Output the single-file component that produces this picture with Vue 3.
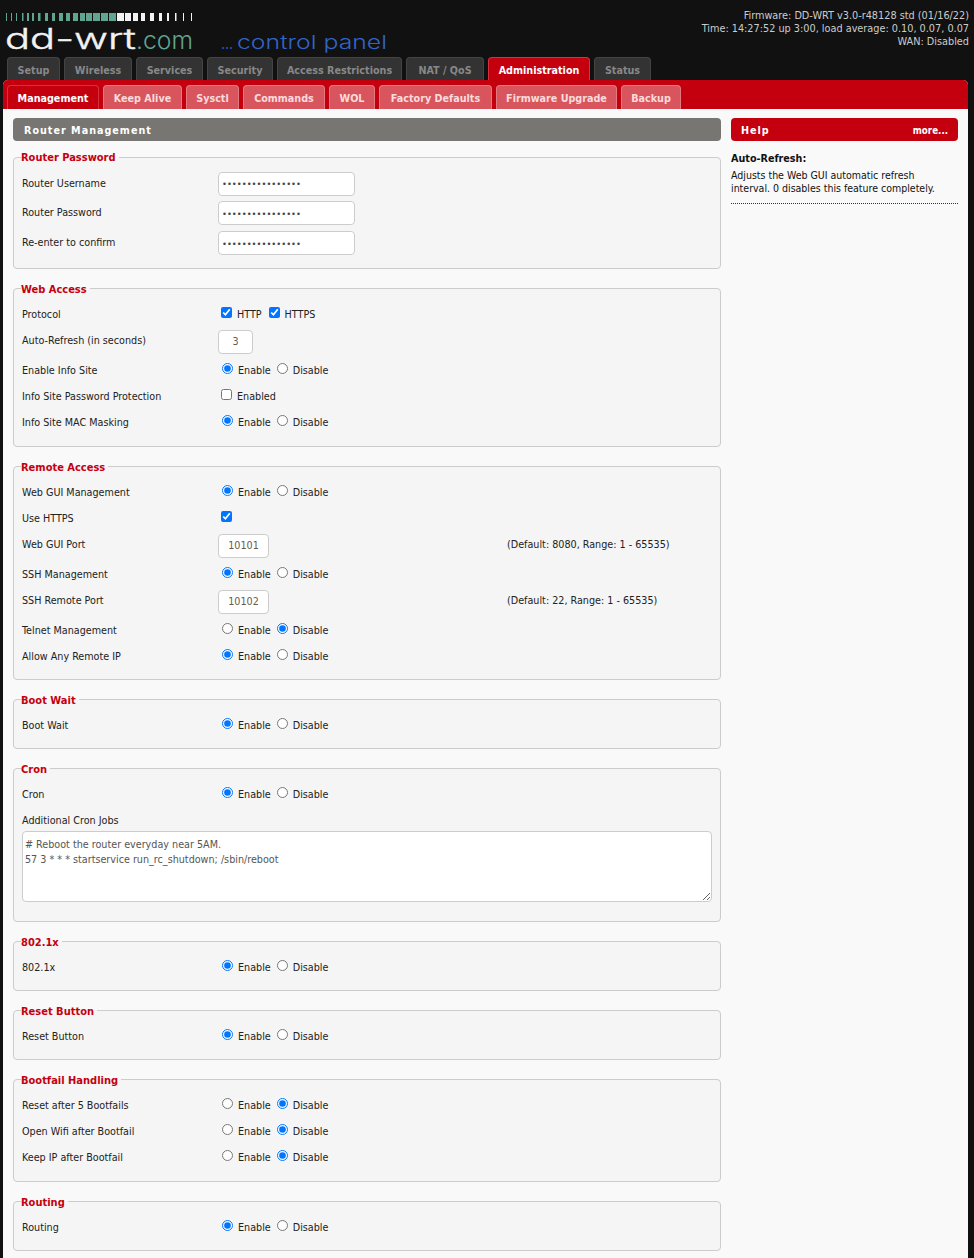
<template>
  <div class="page">
    <div class="header">
      <svg class="logo" width="400" height="57" viewBox="0 0 400 57">
        <rect
          v-for="(b, i) in bars"
          :key="i"
          :x="b[0]"
          y="13"
          :width="b[1]"
          height="8"
          :fill="i < 17 ? '#5fa58f' : '#f2f2f2'"
        />
        <text x="5" y="49" class="logo-main" textLength="131" lengthAdjust="spacingAndGlyphs">dd-wrt</text>
        <text x="136" y="49" class="logo-com" textLength="57" lengthAdjust="spacingAndGlyphs">.com</text>
        <text x="221" y="49" class="logo-panel" textLength="12" lengthAdjust="spacingAndGlyphs">...</text>
        <text x="237" y="49" class="logo-panel" textLength="150" lengthAdjust="spacingAndGlyphs">control panel</text>
      </svg>
      <div class="info">
        <div>Firmware: DD-WRT v3.0-r48128 std (01/16/22)</div>
        <div>Time: 14:27:52 up 3:00, load average: 0.10, 0.07, 0.07</div>
        <div>WAN: Disabled</div>
      </div>
    </div>

    <div class="tabs">
      <div
        v-for="t in mainTabs"
        :key="t.name"
        class="tab"
        :class="{ active: t.name === 'Administration' }"
        :style="{ width: t.width + 'px' }"
      >
        {{ t.name }}
      </div>
    </div>

    <div class="frame">
      <div class="subtabs">
        <div
          v-for="t in subTabs"
          :key="t.name"
          class="subtab"
          :class="{ active: t.name === 'Management' }"
          :style="{ width: t.width + 'px' }"
        >
          {{ t.name }}
        </div>
      </div>

      <div class="content">
        <div class="main">
          <h2 class="bar">Router Management</h2>

          <fieldset v-for="s in sections" :key="s.title" :class="{ tall: s.tall }">
            <legend>{{ s.title }}</legend>
            <template v-for="r in s.rows" :key="r.label">
              <div class="row" :class="r.kind">
                <div class="label">{{ r.label }}</div>
                <div class="value">
                  <template v-if="r.kind === 'radio'">
                    <label class="opt"><input type="radio" :name="r.label" :checked="r.on" />Enable</label>
                    <label class="opt"><input type="radio" :name="r.label" :checked="!r.on" />Disable</label>
                  </template>
                  <input v-else-if="r.kind === 'pass'" class="text pass" type="password" value="aaaaaaaaaaaaaaaa" />
                  <input v-else-if="r.kind === 'num'" class="text num" type="text" :style="{ width: r.width + 'px' }" :value="r.value" />
                  <template v-else-if="r.kind === 'check'">
                    <label v-for="o in r.options" :key="o.text" class="opt check">
                      <input type="checkbox" :checked="o.on" />{{ o.text }}
                    </label>
                  </template>
                </div>
                <div v-if="r.note" class="note">{{ r.note }}</div>
              </div>
            </template>
            <textarea v-if="s.cron" class="cron" :value="cronJobs"></textarea>
          </fieldset>
        </div>

        <div class="side">
          <div class="help-bar"><span>Help</span><span class="more">more...</span></div>
          <div class="help-body">
            <h4>Auto-Refresh:</h4>
            <p>Adjusts the Web GUI automatic refresh interval. 0 disables this feature completely.</p>
          </div>
        </div>
      </div>
    </div>
  </div>
</template>

<script setup>
const bars = [
  [6, 1], [11, 1], [16, 1], [22, 1.5], [27, 2], [32, 2], [38, 2.5], [45, 3], [52, 3], [59, 4],
  [66, 4], [73, 5], [80, 5], [86, 6], [93, 7], [101, 7], [109, 7],
  [117, 7], [125, 6], [133, 5], [141, 4], [150, 4], [159, 3], [167, 2], [175, 1.5], [183, 1], [191, 1],
]

const mainTabs = [
  { name: 'Setup', width: 53 },
  { name: 'Wireless', width: 68 },
  { name: 'Services', width: 67 },
  { name: 'Security', width: 66 },
  { name: 'Access Restrictions', width: 125 },
  { name: 'NAT / QoS', width: 78 },
  { name: 'Administration', width: 102 },
  { name: 'Status', width: 57 },
]
const subTabs = [
  { name: 'Management', width: 92 },
  { name: 'Keep Alive', width: 79 },
  { name: 'Sysctl', width: 53 },
  { name: 'Commands', width: 82 },
  { name: 'WOL', width: 46 },
  { name: 'Factory Defaults', width: 113 },
  { name: 'Firmware Upgrade', width: 121 },
  { name: 'Backup', width: 60 },
]

const radio = (label, on = true) => ({ kind: 'radio', label, on })
const pass = (label) => ({ kind: 'pass', label })
const cronJobs = '# Reboot the router everyday near 5AM.\n57 3 * * * startservice run_rc_shutdown; /sbin/reboot'

const sections = [
  { title: 'Router Password', rows: [pass('Router Username'), pass('Router Password'), pass('Re-enter to confirm')] },
  {
    title: 'Web Access',
    tall: true,
    rows: [
      { kind: 'check', label: 'Protocol', options: [{ text: 'HTTP', on: true }, { text: 'HTTPS', on: true }] },
      { kind: 'num', label: 'Auto-Refresh (in seconds)', value: '3', width: 35 },
      radio('Enable Info Site'),
      { kind: 'check', label: 'Info Site Password Protection', options: [{ text: 'Enabled', on: false }] },
      radio('Info Site MAC Masking'),
    ],
  },
  {
    title: 'Remote Access',
    rows: [
      radio('Web GUI Management'),
      { kind: 'check', label: 'Use HTTPS', options: [{ text: '', on: true }] },
      { kind: 'num', label: 'Web GUI Port', value: '10101', width: 51, note: '(Default: 8080, Range: 1 - 65535)' },
      radio('SSH Management'),
      { kind: 'num', label: 'SSH Remote Port', value: '10102', width: 51, note: '(Default: 22, Range: 1 - 65535)' },
      radio('Telnet Management', false),
      radio('Allow Any Remote IP'),
    ],
  },
  { title: 'Boot Wait', rows: [radio('Boot Wait')] },
  { title: 'Cron', cron: true, rows: [radio('Cron'), { kind: 'plain', label: 'Additional Cron Jobs' }] },
  { title: '802.1x', rows: [radio('802.1x')] },
  { title: 'Reset Button', rows: [radio('Reset Button')] },
  {
    title: 'Bootfail Handling',
    tall: true,
    rows: [radio('Reset after 5 Bootfails', false), radio('Open Wifi after Bootfail', false), radio('Keep IP after Bootfail', false)],
  },
  { title: 'Routing', rows: [radio('Routing')] },
]
</script>

<style>
html,
body {
  background: #111;
}
</style>

<style scoped>
.page {
  height: 1258px;
  overflow: hidden;
  background: #111;
  font-family: "DejaVu Sans Condensed", "DejaVu Sans", sans-serif;
  font-stretch: condensed;
  font-size: 10.7px;
  color: #222;
}

.header {
  height: 57px;
  position: relative;
}

.logo {
  display: block;
}

.logo text {
  font-family: Inter, "Liberation Sans", sans-serif;
}

.logo-main {
  font-size: 28px;
  font-weight: 300;
  fill: #f2f2f2;
  stroke: #f2f2f2;
  stroke-width: 0.4;
}

.logo-com {
  font-size: 24px;
  font-weight: 300;
  fill: #5fa58f;
}

.logo-panel {
  font-size: 19px;
  font-weight: 300;
  fill: #3264c8;
}

.info {
  position: absolute;
  top: 9px;
  right: 5px;
  text-align: right;
  font-size: 10.8px;
  color: #ccc;
  line-height: 13px;
}

.tabs {
  display: flex;
  gap: 4px;
  height: 23px;
  padding-left: 7px;
}

.tab,
.subtab {
  box-sizing: border-box;
  line-height: 25px;
  font-weight: 700;
  text-align: center;
  white-space: nowrap;
  border: 1px solid #444;
  border-bottom: 0;
  border-radius: 4px 4px 0 0;
}

.tab {
  color: #888;
  background: #333;
}

.tab.active {
  color: #fff;
  background: #c4000f;
  border-color: #d8303c;
}

.frame {
  margin: 0 6px 0 3px;
  border-radius: 5px 5px 0 0;
  overflow: hidden;
  background: #f9f9f9;
  height: 1178px;
}

.subtabs {
  display: flex;
  gap: 4px;
  height: 24px;
  padding: 5px 0 0 4px;
  background: #c4000f;
}

.subtab {
  color: #fbdcdc;
  background: #d9555e;
  border-color: #e37a80;
}

.subtab.active {
  color: #fff;
  background: #c4000f;
  border-color: #d8303c;
}

.content {
  display: flex;
  gap: 10px;
  padding: 9px 10px 0;
}

.main {
  width: 708px;
  flex-shrink: 0;
}

.side {
  width: 227px;
}

.bar,
.help-bar {
  height: 23px;
  margin: 0;
  padding: 0 11px;
  line-height: 25px;
  font-size: 10.7px;
  font-weight: 700;
  letter-spacing: 1px;
  color: #fff;
  background: #787673;
  border-radius: 4px;
}

.help-bar {
  display: flex;
  justify-content: space-between;
  padding: 0 10px;
  background: #c4000f;
}

.more {
  letter-spacing: 0;
  font-size: 9.7px;
}

.help-body {
  padding-bottom: 8px;
  border-bottom: 1px dotted #333;
  margin-top: 11px;
  color: #111;
}

.help-body h4 {
  margin: 0 0 3px;
  font-size: 10.7px;
  line-height: 14px;
}

.help-body p {
  margin: 0;
  padding-right: 10px;
  font-size: 10.5px;
  line-height: 13px;
}

fieldset {
  margin: 7px 0 11px;
  padding: 3px 8px 10px;
  min-width: 0;
  background: #f5f5f5;
  border: 1px solid #ccc;
  border-radius: 4px;
}

fieldset.tall {
  padding-bottom: 11px;
}

legend {
  padding: 2px 3px 0 0;
  margin-left: -1px;
  line-height: 16px;
  font-size: 11px;
  font-weight: 700;
  color: #c4000f;
}

.row {
  display: grid;
  grid-template-columns: 196px 289px 1fr;
  align-items: center;
  height: 26px;
}

.row.pass {
  height: 29.67px;
}

.row.num {
  height: 30px;
}

.row.plain {
  height: 24px;
}

.label,
.opt {
  padding-top: 1px;
}

.row.pass .label {
  margin-top: -2px;
}

.row.num .label {
  margin-top: -4px;
}

.row.plain .label {
  margin-top: 2px;
}

.note {
  margin-top: -2px;
}

.value {
  display: flex;
  align-items: center;
}

.text {
  box-sizing: border-box;
  height: 24px;
  padding: 0 3px;
  background: #fff;
  border: 1px solid #ccc;
  border-radius: 4px;
  font: inherit;
  color: #555;
  outline: none;
}

.pass .text {
  width: 137px;
  font-size: 9.3px;
  color: #444;
}

.num.row .text {
  text-align: center;
  color: #6b5a4a;
}

.opt {
  display: flex;
  align-items: center;
  margin-right: 2px;
}

.opt input {
  width: 11px;
  height: 11px;
  margin: 0 5px 3px 4px;
}

.opt.check {
  margin-right: 4px;
}

.opt.check input {
  margin: 0 5px 3px 3px;
}

.cron {
  display: block;
  box-sizing: border-box;
  width: 690px;
  height: 71px;
  margin: 0 0 9px;
  padding: 5px 2px;
  background: #fff;
  border: 1px solid #ccc;
  border-radius: 4px;
  font: inherit;
  line-height: 15px;
  color: #555;
  outline: none;
}
</style>
